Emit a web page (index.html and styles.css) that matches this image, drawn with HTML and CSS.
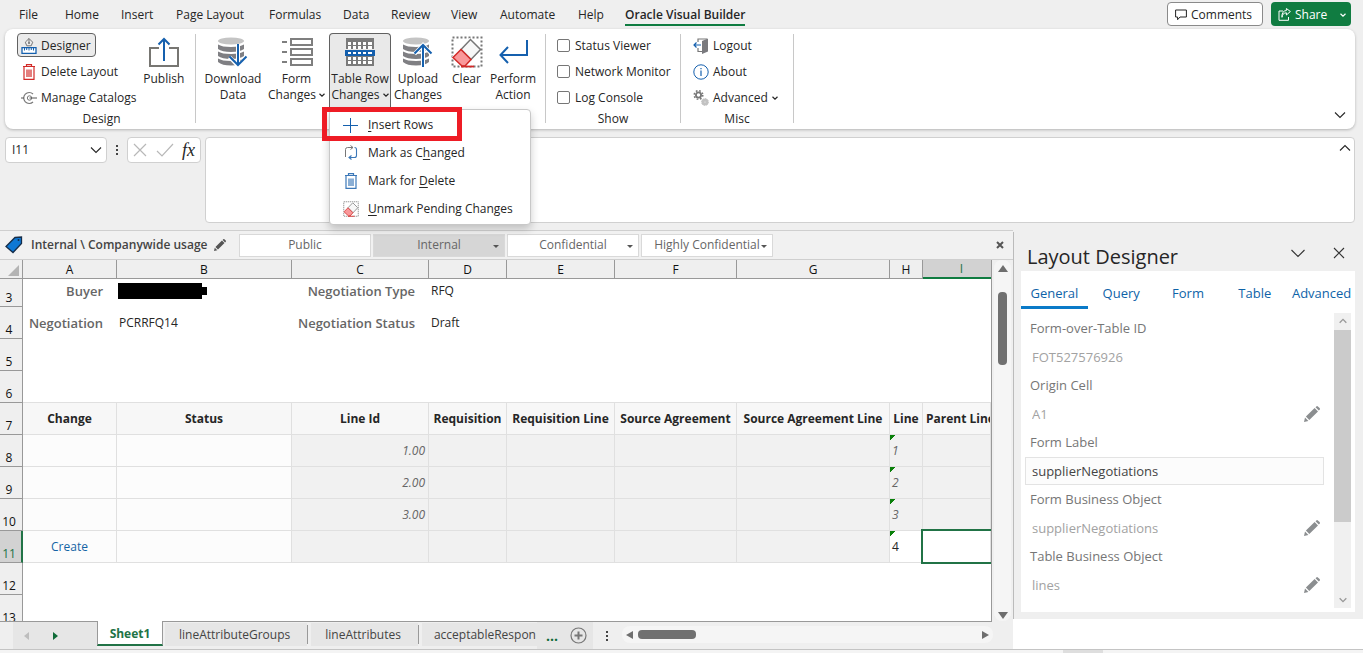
FILE: index.html
```
<!DOCTYPE html>
<html lang="en">
<head>
    <meta charset="UTF-8">
    <meta name="viewport" content="width=device-width, initial-scale=1.0">
    <title>Negotiation Lines</title>
    <link rel="stylesheet" href="styles.css">
</head>
<body>
    <!-- Shared icons -->
    <svg class="icon-defs" width="0" height="0">
        <symbol id="pencil" viewBox="0 0 16 16">
            <path d="M0 16l1-4.400 3.400 3.400zM1.900 10.600L10.600 2l3.400 3.400-8.700 8.700zM11.500 1.200l.8-.8q.8-.7 1.600 0l1.700 1.700q.8.800 0 1.600l-.8.8z"/>
        </symbol>
        <symbol id="chevron" viewBox="0 0 12 8">
            <path d="M1 1.500l5 5 5-5" fill="none" stroke="currentColor" stroke-width="1.100"/>
        </symbol>
        <symbol id="caret" viewBox="0 0 6 4">
            <path d="M.5.700L3 3.100 5.500.700" fill="none" stroke="currentColor" stroke-width="1.200"/>
        </symbol>
        <symbol id="database" viewBox="0 0 32 32">
            <ellipse cx="14" cy="5" rx="13" ry="3.500" fill="#c4c4c4"/>
            <path d="M1 8.500q4 2.500 13 2.500t13-2.500v4.500q-4 3-13 3T1 13zM1 15.500q4 2.500 13 2.500t13-2.500V20q-4 3-13 3T1 20zM1 22.500q4 2.500 13 2.500t13-2.500V26q-4 3.500-13 3.500T1 26z" fill="#7f7f83"/>
        </symbol>
        <symbol id="eraser" viewBox="0 0 32 32">
            <path d="M1.500 1.500h29v29h-29z" fill="none" stroke="#777" stroke-width="2" stroke-dasharray="2 2"/>
            <path d="M10 31L1 20.500 18.500 2 30 13.500 16 27l7 4z" fill="#fff"/>
            <path d="M10 13.500L19.500 3.500l10 10-9.500 10z" fill="#f7f7f7" stroke="#777" stroke-width="1.500"/>
            <path d="M10 13.500L2 21.500l9 8.500h3l6-6.500z" fill="#f9989a" stroke="#d22a28" stroke-width="1.500"/>
            <path d="M10 30.500h13" stroke="#d22a28" stroke-width="1.800"/>
        </symbol>
        <symbol id="trash" viewBox="0 0 16 16">
            <path d="M2 2.500h12M5.500 2V.700h5V2M3 3v12.400h10V3M6 5.500V13M8 5.500V13M10 5.500V13" fill="none" stroke="currentColor" stroke-width="1.200"/>
        </symbol>
    </svg>

    <div class="app">
        <!-- Ribbon tabs -->
        <header class="tab-bar">
            <nav class="ribbon-tabs">
                <a href="#">File</a>
                <a href="#">Home</a>
                <a href="#">Insert</a>
                <a href="#">Page Layout</a>
                <a href="#">Formulas</a>
                <a href="#">Data</a>
                <a href="#">Review</a>
                <a href="#">View</a>
                <a href="#">Automate</a>
                <a href="#">Help</a>
                <a href="#" class="active">Oracle Visual Builder</a>
            </nav>
            <div class="tab-actions">
                <button class="comments-button">
                    <svg width="12" height="12" viewBox="0 0 12 12"><path d="M.6 1h10.800v7H5L2.600 10.700V8h-2z" fill="none" stroke="#222"/></svg>
                    Comments
                </button>
                <button class="share-button">
                    <svg width="13" height="13" viewBox="0 0 13 13"><path d="M5 3H1v9.300h9.500V9M4 9.300q.2-4.300 4.400-4.500V7l4-3.500-4-3v2Q3.500 3 4 9.300z" fill="none" stroke="#fff"/></svg>
                    Share
                    <svg class="share-caret" width="6" height="4"><use href="#caret"/></svg>
                </button>
            </div>
        </header>

        <!-- Ribbon -->
        <section class="ribbon">
            <div class="group design-group">
                <div class="group-content">
                    <div class="small-stack">
                        <button class="small-button pressed">
                            <svg width="16" height="16" viewBox="0 0 16 16"><path d="M1 9.700h14v5.600H1z" fill="#fff" stroke="#1560ae" stroke-width="1.300"/><path d="M3.500 10v2.500M5.700 10v2M8 10v2.500M10.300 10v2M12.500 10v2.500" stroke="#1560ae"/><path d="M8 .5v5M8 .5L4.300 4.200 5.800 7.800h4.400l1.500-3.600z" fill="none" stroke="#777"/><circle cx="8" cy="5" r="1" fill="#777"/></svg>
                            Designer
                        </button>
                        <button class="small-button">
                            <svg class="red" width="16" height="16"><use href="#trash"/></svg>
                            Delete Layout
                        </button>
                        <button class="small-button">
                            <svg width="16" height="16" viewBox="0 0 16 16"><path d="M12 4A5.500 5.500 0 1 0 12 12" fill="none" stroke="#777" stroke-width="1.200"/><circle cx="8.500" cy="8" r="2.200" fill="none" stroke="#777"/><path d="M0 8h3M8.500 8H16" stroke="#555"/></svg>
                            Manage Catalogs
                        </button>
                    </div>
                    <button class="large-button publish">
                        <svg width="32" height="32" viewBox="0 0 32 32"><path d="M11 12H2v18h28V12h-9" fill="none" stroke="#777672" stroke-width="2"/><path d="M16 25V3M10.500 8.500L16 3l5.500 5.500" fill="none" stroke="#1560ae" stroke-width="2"/></svg>
                        Publish
                    </button>
                </div>
                <div class="group-label">Design</div>
            </div>
            <div class="divider"></div>

            <div class="group data-group">
                <button class="large-button">
                    <svg width="32" height="32" viewBox="0 0 32 32"><use href="#database"/><path d="M21 8v22M12.500 21l8.500 9 8.500-9" fill="none" stroke="#fff" stroke-width="4"/><path d="M21 8v21M12.500 20.500l8.500 8.500 8.500-8.500" fill="none" stroke="#1560ae" stroke-width="2"/></svg>
                    Download<br>Data
                </button>
                <button class="large-button">
                    <svg width="32" height="32" viewBox="0 0 32 32"><path d="M10 3h21v6H10zM10 13h21v6H10zM10 23h21v6H10zM1 6h5M1 16h5M1 26h5" fill="none" stroke="#7f7f7f" stroke-width="2"/></svg>
                    <span>Form<br>Changes <svg width="6" height="4"><use href="#caret"/></svg></span>
                </button>
                <div class="menu-anchor">
                    <button class="large-button pressed">
                        <svg width="32" height="32" viewBox="0 0 32 32"><path d="M2 2h28v11H2zM2 20h28v10H2z" fill="#7a7a7a"/><path d="M4 6h3v3H4zM9 6h3v3H9zM14 6h3v3h-3zM19 6h3v3h-3zM24 6h4v3h-4zM4 10h3v3H4zM9 10h3v3H9zM14 10h3v3h-3zM19 10h3v3h-3zM24 10h4v3h-4zM4 21h3v3H4zM9 21h3v3H9zM14 21h3v3h-3zM19 21h3v3h-3zM24 21h4v3h-4zM4 25h3v3H4zM9 25h3v3H9zM14 25h3v3h-3zM19 25h3v3h-3zM24 25h4v3h-4z" fill="#fff"/><path d="M1 14h30v6H1z" fill="#1560ae"/><path d="M4 16h3v2H4zM9 16h3v2H9zM14 16h3v2h-3zM19 16h3v2h-3zM24 16h4v2h-4z" fill="#fff"/></svg>
                        <span>Table Row<br>Changes <svg width="6" height="4"><use href="#caret"/></svg></span>
                    </button>
                    <!-- Open drop-down menu -->
                    <div class="menu">
                        <button class="menu-item">
                            <svg width="16" height="16" viewBox="0 0 16 16"><path d="M7 1h1v15H7zM0 8h15v1H0z" fill="#1560ae"/></svg>
                            <span><u>I</u>nsert Rows</span>
                        </button>
                        <button class="menu-item">
                            <svg width="16" height="16" viewBox="0 0 16 16"><path d="M10 2.500H4.500q-2 0-2 2V12M7.500.500l2.500 2-2.500 2" fill="none" stroke="#777"/><path d="M11.500 2.500q2 0 2 2v6q0 2-2 2H6M8.500 10.500l-2.500 2 2.500 2" fill="none" stroke="#3c78b8" stroke-width="1.100"/></svg>
                            <span>Mark as C<u>h</u>anged</span>
                        </button>
                        <button class="menu-item">
                            <svg class="blue" width="16" height="16"><use href="#trash"/></svg>
                            <span>Mark for <u>D</u>elete</span>
                        </button>
                        <button class="menu-item">
                            <svg width="16" height="16"><use href="#eraser"/></svg>
                            <span><u>U</u>nmark Pending Changes</span>
                        </button>
                    </div>
                    <div class="highlight"></div>
                </div>
                <button class="large-button">
                    <svg width="32" height="32" viewBox="0 0 32 32"><use href="#database"/><path d="M21 31V8M12.500 18L21 9l8.500 9" fill="none" stroke="#fff" stroke-width="4"/><path d="M21 31V9M12.500 17.500L21 9l8.500 8.500" fill="none" stroke="#1560ae" stroke-width="2"/></svg>
                    Upload<br>Changes
                </button>
                <button class="large-button">
                    <svg width="32" height="32"><use href="#eraser"/></svg>
                    Clear
                </button>
                <button class="large-button">
                    <svg width="32" height="32" viewBox="0 0 32 32"><path d="M30 4v15H4M11 11l-7.500 8 7.500 8" fill="none" stroke="#1560ae" stroke-width="2"/></svg>
                    Perform<br>Action
                </button>
            </div>
            <div class="divider"></div>

            <div class="group show-group">
                <div class="group-content small-stack">
                    <label class="check-row"><input type="checkbox"> Status Viewer</label>
                    <label class="check-row"><input type="checkbox"> Network Monitor</label>
                    <label class="check-row"><input type="checkbox"> Log Console</label>
                </div>
                <div class="group-label">Show</div>
            </div>
            <div class="divider"></div>

            <div class="group misc-group">
                <div class="group-content small-stack">
                    <button class="small-button">
                        <svg width="16" height="16" viewBox="0 0 16 16"><path d="M5 4V1h9M5 10v3.500h4" fill="none" stroke="#777" stroke-width="1.200"/><path d="M9 3l6-2.500v13L9 16z" fill="#7a7a7e"/><path d="M8 7H1M3.500 4.500L1 7l2.500 2.500" fill="none" stroke="#1560ae" stroke-width="1.200"/></svg>
                        Logout
                    </button>
                    <button class="small-button">
                        <svg width="16" height="16" viewBox="0 0 16 16"><circle cx="8" cy="8" r="7.200" fill="none" stroke="#1560ae"/><path d="M8 6.500V12M8 4v1.300" stroke="#1560ae" stroke-width="1.200"/></svg>
                        About
                    </button>
                    <button class="small-button">
                        <svg width="16" height="16" viewBox="0 0 16 16"><circle cx="5.500" cy="5" r="2.600" fill="none" stroke="#777" stroke-width="1.800"/><circle cx="5.500" cy="5" r="4.300" fill="none" stroke="#777" stroke-width="1.500" stroke-dasharray="1.700 1.700"/><circle cx="12" cy="12" r="2" fill="none" stroke="#c2c2c2" stroke-width="3"/><circle cx="12" cy="12" r="3.400" fill="none" stroke="#c2c2c2" stroke-dasharray="1.300 1.300"/></svg>
                        Advanced <svg width="6" height="4"><use href="#caret"/></svg>
                    </button>
                </div>
                <div class="group-label">Misc</div>
            </div>
            <div class="divider"></div>
            <button class="ribbon-collapse" aria-label="Ribbon options"><svg width="12" height="8"><use href="#chevron"/></svg></button>
        </section>

        <!-- Formula bar -->
        <section class="formula-bar">
            <div class="name-box">
                <input type="text" value="I11" aria-label="Name box">
                <svg width="12" height="8"><use href="#chevron"/></svg>
            </div>
            <svg class="dots" width="3" height="12" viewBox="0 0 3 12"><path d="M0 0h2v2H0zM0 4h2v2H0zM0 8h2v2H0z" fill="#444"/></svg>
            <div class="fx-box">
                <button aria-label="Cancel"><svg width="14" height="14" viewBox="0 0 14 14"><path d="M1 1l12 12M13 1L1 13" stroke="#b8b8b8" stroke-width="1.200"/></svg></button>
                <button aria-label="Enter"><svg width="18" height="14" viewBox="0 0 18 14"><path d="M1 8l5 5L17 1" fill="none" stroke="#b8b8b8" stroke-width="1.200"/></svg></button>
                <button class="fx" aria-label="Insert function">fx</button>
            </div>
            <div class="formula-box">
                <textarea aria-label="Formula"></textarea>
                <button aria-label="Collapse formula bar"><svg class="flip" width="12" height="8"><use href="#chevron"/></svg></button>
            </div>
        </section>

        <main class="workspace">
            <section class="book">
                <!-- Sensitivity bar -->
                <div class="sensitivity">
                    <svg width="18" height="18" viewBox="0 0 18 18"><path d="M10 1.500L16.500 1v6.500L8 16.500 1 10.500z" fill="#0f78d4" stroke="#152d49" stroke-width="1.300"/><circle cx="13.500" cy="4" r="1" fill="#152d49"/></svg>
                    <strong>Internal \ Companywide usage</strong>
                    <svg class="edit-icon" width="12" height="12"><use href="#pencil"/></svg>
                    <div class="levels">
                        <button>Public</button>
                        <button class="selected">Internal <i class="arrow"></i></button>
                        <button>Confidential <i class="arrow"></i></button>
                        <button>Highly Confidential <i class="arrow"></i></button>
                    </div>
                    <button class="bar-close" aria-label="Close"><svg width="8" height="8" viewBox="0 0 8 8"><path d="M1 1l6 6M7 1L1 7" stroke="#555" stroke-width="2"/></svg></button>
                </div>

                <div class="sheet-area">
                    <div class="sheet">
                        <table>
                            <colgroup>
                                <col class="col-num"><col class="col-a"><col class="col-b"><col class="col-c"><col class="col-d"><col class="col-e"><col class="col-f"><col class="col-g"><col class="col-h"><col>
                            </colgroup>
                            <thead>
                                <tr>
                                    <th class="corner"><svg width="12" height="12" viewBox="0 0 12 12"><path d="M11 0v11H0z" fill="#b4b4b4"/></svg></th>
                                    <th>A</th><th>B</th><th>C</th><th>D</th><th>E</th><th>F</th><th>G</th><th>H</th><th class="current">I</th>
                                </tr>
                            </thead>
                            <tbody>
                                <tr class="first-row">
                                    <th>3</th>
                                    <td class="field-name">Buyer</td>
                                    <td><div class="redacted"></div></td>
                                    <td class="field-name">Negotiation Type</td>
                                    <td>RFQ</td>
                                    <td></td><td></td><td></td><td></td><td></td>
                                </tr>
                                <tr>
                                    <th>4</th>
                                    <td class="field-name">Negotiation</td>
                                    <td>PCRRFQ14</td>
                                    <td class="field-name">Negotiation Status</td>
                                    <td>Draft</td>
                                    <td></td><td></td><td></td><td></td><td></td>
                                </tr>
                                <tr><th>5</th><td colspan="9"></td></tr>
                                <tr class="above-lines"><th>6</th><td colspan="9"></td></tr>
                                <tr class="line-head">
                                    <th>7</th>
                                    <td>Change</td><td>Status</td><td>Line Id</td><td>Requisition</td><td>Requisition Line</td><td>Source Agreement</td><td>Source Agreement Line</td><td>Line</td><td class="cut">Parent Line</td>
                                </tr>
                                <tr class="line">
                                    <th>8</th>
                                    <td class="open"></td><td class="open"></td><td class="number">1.00</td><td></td><td></td><td></td><td></td><td class="flagged">1</td><td></td>
                                </tr>
                                <tr class="line">
                                    <th>9</th>
                                    <td class="open"></td><td class="open"></td><td class="number">2.00</td><td></td><td></td><td></td><td></td><td class="flagged">2</td><td></td>
                                </tr>
                                <tr class="line">
                                    <th>10</th>
                                    <td class="open"></td><td class="open"></td><td class="number">3.00</td><td></td><td></td><td></td><td></td><td class="flagged">3</td><td></td>
                                </tr>
                                <tr class="line">
                                    <th class="current">11</th>
                                    <td class="open create">Create</td><td class="open"></td><td></td><td></td><td></td><td></td><td></td><td class="flagged editable">4</td><td class="active-cell"></td>
                                </tr>
                                <tr><th>12</th><td colspan="9"></td></tr>
                                <tr><th>13</th><td colspan="9"></td></tr>
                            </tbody>
                        </table>
                    </div>
                    <div class="v-scroll">
                        <i class="tri up"></i>
                        <i class="thumb"></i>
                        <i class="tri down"></i>
                    </div>
                </div>

                <!-- Sheet tabs -->
                <div class="sheet-bar">
                    <div class="sheet-nav"><i class="tri left"></i><i class="tri right"></i></div>
                    <button class="sheet-tab active">Sheet1</button>
                    <button class="sheet-tab">lineAttributeGroups</button>
                    <button class="sheet-tab">lineAttributes</button>
                    <button class="sheet-tab clipped">acceptableRespon</button>
                    <div class="sheet-more">
                        <button class="more-sheets">...</button>
                        <button aria-label="New sheet"><svg width="17" height="17" viewBox="0 0 17 17"><circle cx="8.500" cy="8.500" r="7.500" fill="none" stroke="#777" stroke-width="1.200"/><path d="M8.500 4.500v8M4.500 8.500h8" stroke="#777" stroke-width="2"/></svg></button>
                    </div>
                    <svg class="dots" width="3" height="12" viewBox="0 0 3 12"><path d="M0 0h2v2H0zM0 4h2v2H0zM0 8h2v2H0z" fill="#444"/></svg>
                    <div class="h-scroll"><i class="tri left"></i><i class="thumb"></i><i class="tri right"></i></div>
                </div>
            </section>

            <!-- Layout designer pane -->
            <aside class="pane-column">
                <div class="pane">
                    <div class="pane-header">
                        <h2>Layout Designer</h2>
                        <button aria-label="Pane options"><svg width="14" height="9" viewBox="0 0 14 9"><path d="M.5 1L7 7.500 13.500 1" fill="none" stroke="#333" stroke-width="1.100"/></svg></button>
                        <button aria-label="Close pane"><svg width="12" height="12" viewBox="0 0 12 12"><path d="M1 1l10 10M11 1L1 11" stroke="#333" stroke-width="1.100"/></svg></button>
                    </div>
                    <div class="pane-body">
                        <nav class="pane-tabs">
                            <a href="#" class="active">General</a>
                            <a href="#">Query</a>
                            <a href="#">Form</a>
                            <a href="#">Table</a>
                            <a href="#">Advanced</a>
                        </nav>
                        <div class="pane-scroll">
                            <form class="fields">
                                <label for="fot-id">Form-over-Table ID</label>
                                <div class="field"><input id="fot-id" type="text" value="FOT527576926" disabled></div>
                                <label for="origin">Origin Cell</label>
                                <div class="field"><input id="origin" type="text" value="A1" disabled><svg width="16" height="16"><use href="#pencil"/></svg></div>
                                <label for="form-label">Form Label</label>
                                <div class="field"><input id="form-label" type="text" value="supplierNegotiations"></div>
                                <label for="form-object">Form Business Object</label>
                                <div class="field"><input id="form-object" type="text" value="supplierNegotiations" disabled><svg width="16" height="16"><use href="#pencil"/></svg></div>
                                <label for="table-object">Table Business Object</label>
                                <div class="field"><input id="table-object" type="text" value="lines" disabled><svg width="16" height="16"><use href="#pencil"/></svg></div>
                            </form>
                            <div class="pane-scrollbar">
                                <svg class="flip" width="8" height="6" viewBox="0 0 12 8"><path d="M1 1.500l5 5 5-5" fill="none" stroke="currentColor" stroke-width="2"/></svg>
                                <i class="thumb"></i>
                                <svg width="8" height="6" viewBox="0 0 12 8"><path d="M1 1.500l5 5 5-5" fill="none" stroke="currentColor" stroke-width="2"/></svg>
                            </div>
                        </div>
                    </div>
                </div>
            </aside>
        </main>
        <footer class="status-bar"><i></i></footer>
    </div>
</body>
</html>
```
FILE: styles.css
```
* {
    box-sizing: border-box;
    margin: 0;
    padding: 0;
}

body {
    font-family: 'Open Sans', 'Noto Sans', sans-serif;
    font-size: 12px;
    line-height: 16px;
    color: #262626;
    background-color: #efefef;
}

button, input, textarea {
    font: inherit;
    color: inherit;
    background: none;
    border: none;
    outline: none;
}

button {
    cursor: pointer;
    white-space: nowrap;
}

a {
    color: inherit;
    text-decoration: none;
}

svg {
    display: block;
    flex: none;
}

.icon-defs {
    position: absolute;
}

.flip {
    transform: rotate(180deg);
}

.app {
    display: flex;
    flex-direction: column;
    height: 100vh;
}

/* Ribbon tabs */
.tab-bar {
    display: flex;
    justify-content: space-between;
    height: 29px;
    padding: 0 12px 0 19px;
}

.ribbon-tabs {
    display: grid;
    grid-template-columns: 46px 56px 55px 93px 74px 48px 60px 49px 78px 47px auto;
    align-items: start;
    padding-top: 4px;
    white-space: nowrap;
}

.ribbon-tabs a {
    padding-top: 2px;
    line-height: 18px;
}

.ribbon-tabs .active {
    font-weight: 600;
    border-bottom: 2px solid #0f7c41;
}

.tab-actions {
    display: flex;
    gap: 8px;
    padding-top: 2px;
}

.comments-button, .share-button {
    display: flex;
    align-items: center;
    gap: 4px;
    height: 24px;
    padding: 1px 8px 0 7px;
    border-radius: 4px;
}

.comments-button {
    width: 96px;
    background-color: #fff;
    border: 1px solid #8a8a8a;
}

.share-button {
    width: 80px;
    padding-right: 5px;
    background-color: #107c41;
    color: #fff;
}

.share-caret {
    margin-left: auto;
}

/* Ribbon */
.ribbon {
    display: flex;
    flex: none;
    height: 100px;
    margin: 0 8px 0 5px;
    background-color: #fff;
    border-radius: 8px;
    box-shadow: 0 1px 3px rgba(0, 0, 0, 0.25);
}

.group {
    padding-top: 4px;
}

.group-content {
    height: 78px;
}

.group-label {
    text-align: center;
}

.divider {
    width: 1px;
    margin: 5px 0 6px;
    background-color: #c8c8c8;
}

.design-group {
    width: 190px;
    padding-left: 12px;
    padding-right: 9px;
}

.design-group .group-content {
    display: flex;
    justify-content: space-between;
}

.small-stack {
    display: grid;
    grid-auto-rows: 24px;
    gap: 2px;
    justify-items: start;
}

.small-button {
    display: flex;
    align-items: center;
    gap: 4px;
    padding: 1px 4px 0 3px;
    border: 1px solid transparent;
}

.small-button.pressed {
    background-color: #ebebeb;
    border-color: #616161;
    border-radius: 4px;
}

.red {
    color: #d22a28;
}

.blue {
    color: #3c78b8;
}

.large-button {
    display: flex;
    flex-direction: column;
    align-items: center;
    padding-top: 2px;
    gap: 2px;
    border: 1px solid transparent;
    border-bottom: none;
    line-height: 16px;
}

.large-button > svg {
    margin-bottom: 1px;
}

.large-button span svg {
    display: inline-block;
    vertical-align: 2px;
}

.publish {
    width: 48px;
}

.large-button.pressed {
    width: 62px;
    height: 77px;
    background-color: #e9e9e9;
    border-color: #616161;
    border-radius: 4px 4px 0 0;
}

.data-group {
    display: grid;
    grid-template-columns: 62px 65px 62px 54px 43px 50px;
    width: 349px;
    padding-left: 6px;
    align-items: start;
}

.show-group {
    width: 134px;
    padding-left: 11px;
}

.show-group .group-label {
    padding-right: 11px;
}

.misc-group {
    width: 112px;
    padding-left: 8px;
    padding-right: 8px;
}

.check-row {
    display: flex;
    align-items: center;
    gap: 5px;
    padding-top: 1px;
    white-space: nowrap;
}

.check-row input {
    appearance: none;
    width: 13px;
    height: 13px;
    border: 1px solid #767676;
    border-radius: 2px;
    background-color: #fff;
}

.ribbon-collapse {
    align-self: flex-end;
    margin: 0 9px 10px auto;
}

/* Drop-down menu */
.menu-anchor {
    position: relative;
}

.menu {
    position: absolute;
    z-index: 5;
    top: 76px;
    left: 0;
    width: 202px;
    padding: 1px 0;
    background-color: #fff;
    border: 1px solid #c8c8c8;
    border-radius: 4px;
    box-shadow: 0 4px 8px rgba(0, 0, 0, 0.2);
}

.menu-item {
    display: flex;
    align-items: center;
    gap: 9px;
    width: 100%;
    height: 28px;
    padding-left: 13px;
}

.menu-item u {
    text-underline-offset: 2px;
}

.highlight {
    position: absolute;
    z-index: 6;
    top: 74px;
    left: -7px;
    width: 140px;
    height: 34px;
    border: 5px solid #ee1c25;
    pointer-events: none;
}

/* Formula bar */
.formula-bar {
    display: flex;
    flex: none;
    align-items: flex-start;
    margin: 8px 8px 7px 5px;
}

.name-box, .fx-box, .formula-box {
    display: flex;
    align-items: center;
    height: 26px;
    background-color: #fff;
    border: 1px solid #d0d0d0;
    border-radius: 4px;
}

.name-box {
    width: 102px;
    padding: 0 4px 0 6px;
}

.name-box input {
    flex: 1;
    min-width: 0;
}

.formula-bar .dots {
    margin: 8px 8px 0 9px;
}

.fx-box {
    width: 74px;
    padding: 0 5px 0 5px;
    justify-content: space-between;
}

.fx {
    font-family: 'Liberation Serif', serif;
    font-style: italic;
    font-size: 18px;
}

.formula-box {
    flex: 1;
    height: 86px;
    margin-left: 4px;
    align-items: flex-start;
}

.formula-box textarea {
    flex: 1;
    height: 100%;
    resize: none;
}

.formula-box button {
    margin: 6px 3px;
}

/* Workspace */
.workspace {
    display: flex;
    flex: 1;
    min-height: 0;
}

.book {
    display: flex;
    flex-direction: column;
    flex: 1;
    min-width: 0;
    border-top: 1px solid #cfcfcf;
}

.sensitivity {
    display: flex;
    flex: none;
    align-items: center;
    height: 29px;
    padding: 0 9px 0 5px;
    border-bottom: 1px solid #cfcfcf;
    background-color: #f1f1f1;
    color: #666;
    white-space: nowrap;
}

.sensitivity strong {
    width: 174px;
    margin-left: 8px;
    font-weight: 600;
    color: #444;
}

.edit-icon {
    margin-left: 9px;
    fill: #555;
}

.levels {
    display: grid;
    grid-template-columns: repeat(4, 132px);
    gap: 2px;
    margin-left: 13px;
}

.levels button {
    position: relative;
    height: 23px;
    background-color: #fff;
    border: 1px solid #d9d9d9;
}

.levels .selected {
    background-color: #d6d6d6;
}

.levels .arrow {
    position: absolute;
    top: 10px;
    right: 5px;
    border: 3px solid transparent;
    border-top-color: #555;
    border-bottom: none;
}

.bar-close {
    margin-left: auto;
}

/* Spreadsheet */
.sheet-area {
    display: flex;
    flex: 1;
    min-height: 0;
}

.sheet {
    flex: 1;
    min-width: 0;
    overflow: hidden;
    background-color: #fff;
    border-right: 1px solid #999;
}

.sheet table {
    width: 100%;
    table-layout: fixed;
    border-collapse: separate;
    border-spacing: 0;
    white-space: nowrap;
}

.col-num { width: 23px; }
.col-a { width: 94px; }
.col-b { width: 175px; }
.col-c { width: 137px; }
.col-d { width: 78px; }
.col-e { width: 108px; }
.col-f { width: 122px; }
.col-g { width: 153px; }
.col-h { width: 33px; }

.sheet th {
    font-weight: 400;
    color: #111;
    background-color: #efefef;
    border-right: 1px solid #999;
    border-bottom: 1px solid #999;
}

.sheet thead th {
    height: 19px;
    padding-top: 2px;
    line-height: 16px;
}

.sheet thead th:last-child {
    border-right: none;
}

.sheet thead .corner {
    padding-top: 0;
}

.corner svg {
    margin: 3px 0 0 8px;
}

.sheet thead .current {
    padding: 1px 0 0 9px;
    color: #217346;
    background-color: #d2d2d2;
    border-bottom: 2px solid #107c41;
}

.sheet tbody th {
    height: 32px;
    padding-right: 4px;
    vertical-align: bottom;
    line-height: 16px;
}

.sheet tbody .current {
    color: #217346;
    background-color: #d2d2d2;
    border-right: 2px solid #217346;
    padding-right: 3px;
}

.sheet td {
    padding: 0 2px;
}

.sheet .first-row th {
    height: 28px;
}

.sheet .first-row td {
    padding-bottom: 4px;
}

.sheet .field-name {
    padding-right: 14px;
    text-align: right;
    font-size: 13px;
    font-weight: 600;
    color: #666;
}

.redacted {
    position: relative;
    width: 84px;
    height: 16px;
    margin-left: -1px;
    background-color: #000;
}

.redacted::after {
    content: '';
    position: absolute;
    left: 84px;
    top: 4px;
    width: 5px;
    height: 8px;
    background-color: #000;
}

.above-lines td {
    border-bottom: 1px solid #e0e0e0;
}

.line-head td, .line td {
    border-right: 1px solid #e0e0e0;
    border-bottom: 1px solid #e0e0e0;
    background-color: #f1f1f1;
}

.line-head td {
    font-weight: 700;
    text-align: center;
    background-color: #f7f7f7;
}

.line-head .cut {
    padding-left: 3px;
    text-align: left;
    overflow: hidden;
}

.line .open {
    background-color: #fcfcfc;
}

.line .number, .line .flagged {
    font-style: italic;
    color: #666;
}

.line .number {
    padding-right: 3px;
    text-align: right;
}

.line .flagged {
    background-image: linear-gradient(135deg, #0a800a 4px, transparent 4px);
}

.line .editable {
    font-style: normal;
    color: #262626;
    background-color: #fff;
}

.line .create {
    text-align: center;
    color: #1464a5;
}

.line .active-cell {
    position: relative;
    background-color: #fff;
}

.active-cell::after {
    content: '';
    position: absolute;
    inset: -2px -4px -2px -2px;
    border: 2px solid #217346;
}

/* Scroll bars */
.tri {
    width: 0;
    height: 0;
    border: 4px solid transparent;
}

.tri.up { border-bottom: 7px solid #6e6e6e; border-top: none; }
.tri.down { border-top: 7px solid #6e6e6e; border-bottom: none; }
.tri.left { border-right: 7px solid #6e6e6e; border-left: none; }
.tri.right { border-left: 7px solid #6e6e6e; border-right: none; }

.v-scroll {
    display: flex;
    flex-direction: column;
    align-items: center;
    width: 17px;
    margin: 0 2px;
    padding: 5px 0 2px;
    border-radius: 8px;
    background-color: #f5f5f5;
}

.v-scroll .tri {
    border-left-width: 5px;
    border-right-width: 5px;
}

.v-scroll .thumb {
    width: 9px;
    height: 73px;
    margin: 20px 0 auto;
    border-radius: 4px;
    background-color: #707070;
}

.sheet-bar {
    display: flex;
    flex: none;
    height: 28px;
    background-image: linear-gradient(#999, #999);
    background-size: calc(100% - 21px) 1px;
    background-repeat: no-repeat;
}

.sheet-nav {
    display: flex;
    align-items: center;
    gap: 24px;
    width: 84px;
    margin: 1px 0 0 13px;
    padding-left: 11px;
    background-color: #e6e6e6;
}

.sheet-nav .left { border-left: none; border-right: 5px solid #bdbdbd; }
.sheet-nav .right { border-right: none; border-left: 5px solid #0f6b38; }

.sheet-tab {
    height: 23px;
    margin: 2px 2px 0;
    padding: 0 17px 0 14px;
    background-color: #e6e6e6;
    color: #444;
    box-shadow: 3px 0 0 -2px #999;
}

.sheet-tab.active {
    width: 66px;
    height: 25px;
    margin: 0;
    padding: 3px 0 0;
    font-weight: 700;
    color: #217346;
    background-color: #fff;
    border: 1px solid #999;
    border-top: none;
    border-bottom: 2px solid #217346;
    box-shadow: none;
}

.sheet-tab.clipped {
    width: 115px;
    margin-right: 0;
    padding: 0 0 0 12px;
    text-align: left;
    overflow: hidden;
    box-shadow: none;
}

.sheet-more {
    display: flex;
    align-items: center;
    gap: 12px;
    width: 56px;
    margin-top: 1px;
    padding-left: 9px;
    background-color: #e6e6e6;
}

.more-sheets {
    font-size: 14px;
    font-weight: 700;
    color: #0f6b38;
}

.sheet-bar .dots {
    margin: 10px 13px 0;
}

.h-scroll {
    display: flex;
    flex: 1;
    align-items: center;
    height: 17px;
    margin: 5px 20px 0 0;
    padding: 0 4px;
    border-radius: 8px;
    background-color: #f5f5f5;
}

.h-scroll .thumb {
    width: 58px;
    height: 9px;
    margin: 0 auto 0 5px;
    border-radius: 4px;
    background-color: #707070;
}

/* Layout designer pane */
.pane-column {
    display: flex;
    flex-direction: column;
    width: 350px;
    padding-bottom: 30px;
    background: linear-gradient(#fff, #fff) no-repeat bottom / 100% 30px;
}

.pane {
    display: flex;
    flex: 1;
    flex-direction: column;
    min-height: 0;
    margin-top: 2px;
    padding: 0 8px 7px 7px;
    border-left: 1px solid #bbb;
}

.pane-header {
    display: flex;
    align-items: center;
    height: 39px;
    padding: 10px 10px 0 6px;
}

.pane-header h2 {
    margin-right: auto;
    font-size: 20px;
    line-height: 28px;
    font-weight: 400;
}

.pane-header button {
    margin-bottom: 7px;
    margin-left: 28px;
}

.pane-body {
    display: flex;
    flex: 1;
    flex-direction: column;
    min-height: 0;
    background-color: #fff;
}

.pane-tabs {
    display: grid;
    grid-template-columns: repeat(5, 1fr);
    color: #0e63a8;
    text-align: center;
    font-size: 13px;
}

.pane-tabs a {
    padding: 14px 0 4px;
    line-height: 17px;
    border-bottom: 3px solid transparent;
}

.pane-tabs .active {
    border-bottom-color: #0a7ac8;
}

.pane-scroll {
    display: flex;
    flex: 1;
    min-height: 0;
    padding: 4px;
    gap: 10px;
}

.fields {
    flex: 1;
    padding-top: 1px;
    font-size: 13px;
    color: #767676;
}

.fields label {
    display: block;
    padding-left: 5px;
    line-height: 29px;
}

.field {
    display: flex;
    align-items: center;
    height: 28px;
}

.field input {
    flex: 1;
    min-width: 0;
    height: 28px;
    padding: 0 6px;
    color: #444;
    background-color: #fcfcfc;
    border: 1px solid #e3e3e3;
}

.field input:disabled {
    color: #a2a2a2;
    background-color: #fff;
    border-color: transparent;
}

.field svg {
    margin-right: 4px;
    fill: #8b8e90;
}

.pane-scrollbar {
    display: flex;
    flex-direction: column;
    align-items: center;
    width: 17px;
    padding: 5px 0;
    background-color: #f0f0f0;
    color: #999;
}

.pane-scrollbar .thumb {
    width: 100%;
    height: 192px;
    margin: 6px 0 auto;
    background-color: #cbcbcb;
}

.status-bar {
    flex: none;
    height: 4px;
    padding-left: 78%;
    border-top: 1px solid #c4c4c4;
    background-color: #f4f4f4;
}

.status-bar i {
    display: block;
    width: 40px;
    height: 3px;
    background-color: #dedede;
}
```
